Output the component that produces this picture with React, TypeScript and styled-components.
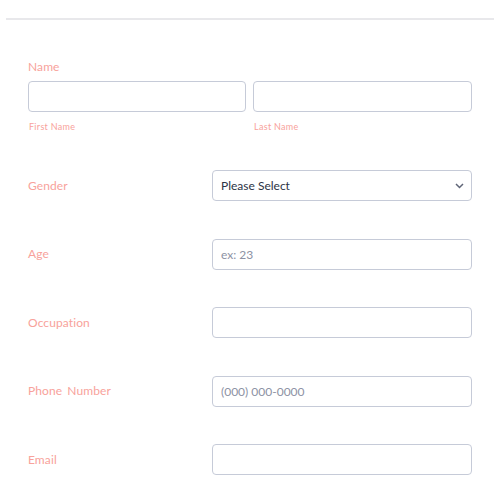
import React from "react";
import styled, { createGlobalStyle } from "styled-components";

const Global = createGlobalStyle`
  html, body { margin: 0; padding: 0; background: #ffffff; }
  body { font-family: "Lato", "Liberation Sans", sans-serif; }
  * { box-sizing: border-box; }
`;

const Page = styled.div`
  width: 500px;
  padding-top: 18px;
`;

const Divider = styled.div`
  margin: 0 6px;
  height: 2px;
  background: #e8e8eb;
`;

const Form = styled.div`
  padding: 39px 28px 0 28px;
  display: flex;
  flex-direction: column;
`;

const Label = styled.div`
  color: #f8a29b;
  font-size: 12px;
  letter-spacing: 0.1px;
  word-spacing: 2px;
  line-height: 16px;
`;

const NameBlock = styled.div`
  display: flex;
  flex-direction: column;
  gap: 6px;
`;

const NameGrid = styled.div`
  display: grid;
  grid-template-columns: 218px 219px;
  column-gap: 7px;
  row-gap: 9px;
`;

const SubLabel = styled.div`
  color: #f8a29b;
  font-size: 9px;
  line-height: 12px;
  padding-left: 1px;
  letter-spacing: 0.3px;
`;

const Input = styled.input`
  width: 100%;
  height: 31px;
  border: 1px solid #c6cbd8;
  border-radius: 4px;
  padding: 0 8px;
  font-family: inherit;
  font-size: 12px;
  color: #2c3345;
  background: #fff;
  outline: none;
  &::placeholder { color: #8d92a4; }
`;

const Rows = styled.div`
  margin-top: 37px;
  display: flex;
  flex-direction: column;
  gap: 37.5px;
`;

const Row = styled.div`
  display: grid;
  grid-template-columns: 184px 260px;
  align-items: center;
`;

const SelectBox = styled.div`
  position: relative;
  height: 31px;
  border: 1px solid #c6cbd8;
  border-radius: 4px;
  display: flex;
  align-items: center;
  padding: 0 8px;
  font-size: 12px;
  color: #2c3345;
`;

const Chevron = styled.svg`
  position: absolute;
  right: 7px;
  top: 12px;
`;

export default function App() {
  return (
    <Page>
      <Global />
      <Divider />
      <Form>
        <NameBlock>
          <Label>Name</Label>
          <NameGrid>
            <Input />
            <Input />
            <SubLabel>First Name</SubLabel>
            <SubLabel>Last Name</SubLabel>
          </NameGrid>
        </NameBlock>
        <Rows>
          <Row>
            <Label>Gender</Label>
            <SelectBox>
              Please Select
              <Chevron width="9" height="6" viewBox="0 0 9 6">
                <path d="M1 1 L4.5 4.5 L8 1" fill="none" stroke="#5f6577" strokeWidth="1.5" />
              </Chevron>
            </SelectBox>
          </Row>
          <Row>
            <Label>Age</Label>
            <Input placeholder="ex: 23" />
          </Row>
          <Row>
            <Label>Occupation</Label>
            <Input />
          </Row>
          <Row>
            <Label>Phone Number</Label>
            <Input placeholder="(000) 000-0000" />
          </Row>
          <Row>
            <Label>Email</Label>
            <Input />
          </Row>
        </Rows>
      </Form>
    </Page>
  );
}
